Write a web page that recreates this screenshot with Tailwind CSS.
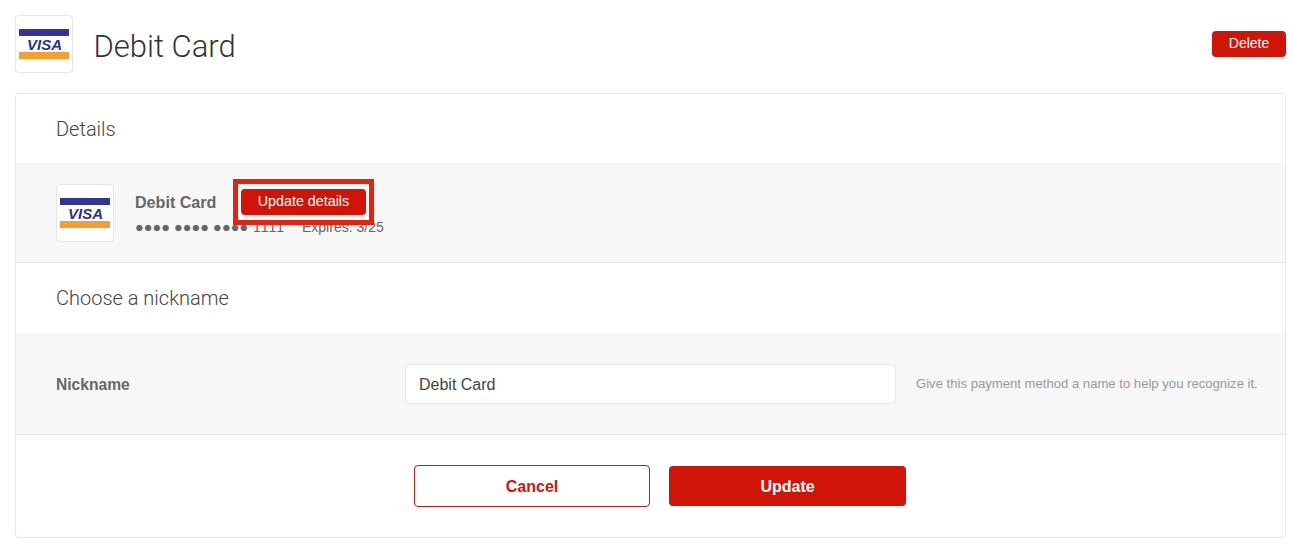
<!DOCTYPE html>
<html lang="en">
<head>
    <meta charset="UTF-8">
    <title>Debit Card</title>
    <script src="https://cdn.jsdelivr.net/npm/@tailwindcss/browser@4"></script>
</head>
<body class="bg-white font-['Liberation_Sans',sans-serif] text-[#666]">
    <div class="w-[1293px] h-[558px] overflow-hidden px-[15px] pt-[15px]">
        <!-- Page header -->
        <div class="flex items-start justify-between w-[1271px] h-[78px]">
            <div class="flex items-start">
                <div class="w-[58px] h-[58px] bg-white border border-[#e6e6e6] rounded-[4px] flex items-center justify-center">
                    <svg width="50" height="30" viewBox="0 0 50 30">
                        <rect width="50" height="7" fill="#333399"/>
                        <rect y="23" width="50" height="7" fill="#f99d31"/>
                        <text x="8" y="21" textLength="35" lengthAdjust="spacingAndGlyphs" font-family="Liberation Sans" font-size="15.5" font-weight="700" font-style="italic" fill="#2b3190">VISA</text>
                    </svg>
                </div>
                <h1 class="ml-[20.5px] pt-[3px] font-['Roboto',sans-serif] font-light text-[31px] leading-[58px] text-[#333]">Debit Card</h1>
            </div>
            <button class="mt-4 pb-[2px] w-[74px] h-[26px] bg-[#d01508] text-white text-sm rounded-[4px]">Delete</button>
        </div>

        <!-- Card -->
        <div class="w-[1271px] h-[445px] border border-[#e6e6e6] rounded-[4px] overflow-hidden">
            <div class="h-[69px] pl-10 flex items-center font-['Roboto',sans-serif] font-light text-xl text-[#444]">Details</div>
            <div class="relative h-[100px] bg-[#f7f7f7] border-b border-[#e6e6e6] pl-10 pt-[21px] flex">
                <div class="w-[58px] h-[58px] bg-white border border-[#e6e6e6] rounded-[4px] flex items-center justify-center">
                    <svg width="50" height="30" viewBox="0 0 50 30">
                        <rect width="50" height="7" fill="#333399"/>
                        <rect y="23" width="50" height="7" fill="#f99d31"/>
                        <text x="8" y="21" textLength="35" lengthAdjust="spacingAndGlyphs" font-family="Liberation Sans" font-size="15.5" font-weight="700" font-style="italic" fill="#2b3190">VISA</text>
                    </svg>
                </div>
                <div class="ml-[21px]">
                    <div class="flex items-center h-[36px]">
                        <span class="w-[82px] font-bold text-[16.1px] whitespace-nowrap">Debit Card</span>
                        <button class="ml-6 w-[125px] h-[26px] bg-[#d01508] text-white text-[14.3px] rounded-[4px]">Update details</button>
                    </div>
                    <div class="flex items-baseline text-sm leading-[18px] mt-[-2px] [font-kerning:none]">
                        <span class="w-[118px] text-[14.5px] leading-[18px] whitespace-nowrap">&#9679;&#9679;&#9679;&#9679; &#9679;&#9679;&#9679;&#9679; &#9679;&#9679;&#9679;&#9679;</span>
                        <span class="w-[49px]">1111</span>
                        <span>Expires: 3/25</span>
                    </div>
                </div>
                <!-- annotation box -->
                <div class="absolute left-[217px] top-[16px] w-[141px] h-[46px] border-[5px] border-[#e8200f]"></div>
            </div>
            <div class="h-[70px] pl-10 flex items-center font-['Roboto',sans-serif] font-light text-xl text-[#444]">Choose a nickname</div>
            <div class="h-[102px] bg-[#f7f7f7] border-b border-[#e6e6e6] pl-10 flex items-center">
                <label class="w-[349px] font-bold text-[15.6px] pt-[2px]">Nickname</label>
                <input value="Debit Card" class="w-[491px] h-[40px] bg-white border border-[#e6e6e6] rounded-[4px] px-[13px] pt-[2px] text-base text-[#444]">
                <span class="ml-5 text-[13.12px] text-[#999]">Give this payment method a name to help you recognize it.</span>
            </div>
            <div class="flex items-center h-[102px] pl-[398px] gap-[19px]">
                <button class="w-[236px] h-[42px] pt-[2px] border border-[#d01508] rounded-[4px] bg-white text-[#d01508] font-bold text-base">Cancel</button>
                <button class="w-[237px] h-[40px] pt-[2px] bg-[#d01508] rounded-[4px] text-white font-bold text-base">Update</button>
            </div>
        </div>
    </div>
</body>
</html>
